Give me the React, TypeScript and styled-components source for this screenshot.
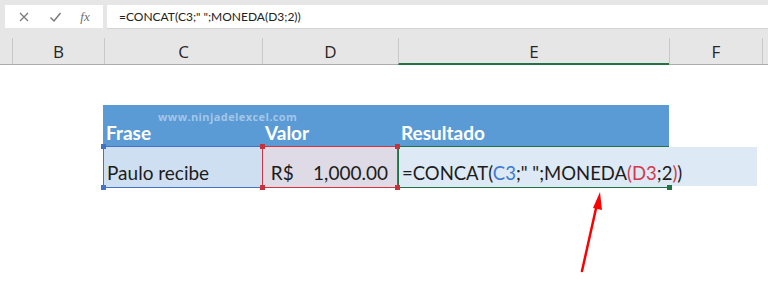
import React from "react";
import styled, { createGlobalStyle } from "styled-components";

const Global = createGlobalStyle`
  html, body { margin: 0; padding: 0; background: #ffffff; }
  body { width: 768px; height: 286px; overflow: hidden; font-family: Lato, "Open Sans", sans-serif; }
`;

const Page = styled.div`
  position: relative;
  width: 768px;
  height: 286px;
  background: #ffffff;
`;

const FormulaBar = styled.div`
  display: flex;
  gap: 4px;
  height: 29px;
  padding: 5px 0 0 5px;
  box-sizing: border-box;
  background: #e6e6e6;
`;

const IconBox = styled.div`
  width: 98px;
  height: 23px;
  background: #ffffff;
  display: flex;
  align-items: center;
  justify-content: space-around;
  padding: 0 4px;
  box-sizing: border-box;
  color: #7a7a7a;
`;

const FxText = styled.span`
  font-family: "Liberation Serif", serif;
  font-style: italic;
  font-size: 13px;
  color: #6e6e6e;
`;

const FormulaInput = styled.div`
  flex: 1;
  height: 23px;
  background: #ffffff;
  border-bottom: 1px solid #d4d4d4;
  display: flex;
  align-items: center;
  padding-left: 12px;
  font-family: Lato, "Open Sans", sans-serif;
  font-size: 12px;
  color: #222222;
  white-space: pre;
`;

const HeaderRow = styled.div`
  display: grid;
  grid-template-columns: 12px 92px 158px 136px 271px 93px 1fr;
  height: 36px;
  background: #e6e6e6;
  border-bottom: 1px solid #ababab;
  box-sizing: border-box;
`;

const ColHead = styled.div<{ $active?: boolean; $sep?: boolean }>`
  display: flex;
  align-items: flex-end;
  justify-content: center;
  margin-top: 9px;
  padding-bottom: 3px;
  border-left: ${(p) => (p.$sep ? "1px solid #c8c8c8" : "none")};
  border-bottom: ${(p) => (p.$active ? "2px solid #217346" : "2px solid transparent")};
  margin-bottom: -1px;
  font-family: "Open Sans", sans-serif;
  font-size: 17px;
  color: #262626;
  line-height: 1;
`;

const Sheet = styled.div`
  padding: 40px 0 0 103px;
`;

const Table = styled.div`
  display: grid;
  grid-template-columns: 159px 136px 271px 88px;
  grid-template-rows: 41px 42px;
  width: max-content;
`;

const HeadCell = styled.div`
  position: relative;
  background: #5b9bd5;
  color: #ffffff;
  font-weight: 700;
  font-size: 19px;
  line-height: 1;
  display: flex;
  align-items: flex-end;
  padding: 0 0 4px 3px;
  box-sizing: border-box;
`;

const Blank = styled.div``;

const DataCell = styled.div<{ $bg: string; $border?: string; $noRight?: boolean }>`
  position: relative;
  background: ${(p) => p.$bg};
  border: ${(p) => (p.$border ? `1px solid ${p.$border}` : "none")};
  border-right: ${(p) => (p.$noRight || !p.$border ? "none" : `1px solid ${p.$border}`)};
  display: flex;
  align-items: flex-end;
  justify-content: space-between;
  padding: 0 9px 3px 3px;
  box-sizing: border-box;
  font-size: 19px;
  color: #1c1c1c;
  white-space: pre;
`;

const FormulaCellText = styled.span`
  font-size: 18.5px;
`;

const Ext = styled.div`
  background: #dde9f5;
  margin: 1px 0 2px;
`;

const Handle = styled.span<{ $c: string; $x: "l" | "r"; $y: "t" | "b" }>`
  position: absolute;
  width: 5px;
  height: 5px;
  background: ${(p) => p.$c};
  ${(p) => (p.$x === "l" ? "left: -3px;" : "right: -3px;")}
  ${(p) => (p.$y === "t" ? "top: -3px;" : "bottom: -3px;")}
  z-index: 2;
`;

const Watermark = styled.span`
  position: absolute;
  left: 55px;
  top: 6px;
  line-height: 1;
  font-family: "Open Sans", sans-serif;
  font-weight: 700;
  font-size: 11px;
  letter-spacing: 0.4px;
  color: rgba(255, 255, 255, 0.45);
  white-space: nowrap;
  z-index: 3;
`;

const Ref = styled.span<{ $c: string }>`
  color: ${(p) => p.$c};
`;

const Arrow = styled.svg`
  position: absolute;
  left: 572px;
  top: 186px;
`;

const BLUE = "#3e7bcf";
const RED = "#d63a4a";

export default function App() {
  return (
    <Page>
      <Global />
      <FormulaBar>
        <IconBox>
          <svg width="12" height="12" viewBox="0 0 12 12">
            <path d="M2 2 L10 10 M10 2 L2 10" stroke="#7a7a7a" strokeWidth="1.3" fill="none" />
          </svg>
          <svg width="13" height="12" viewBox="0 0 13 12">
            <path d="M1.5 6.5 L5 10 L11.5 2" stroke="#7a7a7a" strokeWidth="1.5" fill="none" />
          </svg>
          <FxText>fx</FxText>
        </IconBox>
        <FormulaInput>{'=CONCAT(C3;" ";MONEDA(D3;2))'}</FormulaInput>
      </FormulaBar>
      <HeaderRow>
        <ColHead />
        <ColHead $sep>B</ColHead>
        <ColHead $sep>C</ColHead>
        <ColHead $sep>D</ColHead>
        <ColHead $sep $active>E</ColHead>
        <ColHead $sep>F</ColHead>
        <ColHead $sep />
      </HeaderRow>
      <Sheet>
        <Table>
          <HeadCell>
            Frase
            <Watermark>www.ninjadelexcel.com</Watermark>
          </HeadCell>
          <HeadCell>Valor</HeadCell>
          <HeadCell>Resultado</HeadCell>
          <Blank />
          <DataCell $bg="#cfdff2" $border="#4472c4" $noRight>
            <span>Paulo recibe</span>
            <Handle $c="#4472c4" $x="l" $y="t" />
            <Handle $c="#4472c4" $x="l" $y="b" />
          </DataCell>
          <DataCell $bg="#dedbe6" $border="#d13440">
            <span>{" R$"}</span>
            <span>1,000.00</span>
            <Handle $c="#c8313c" $x="l" $y="t" />
            <Handle $c="#c8313c" $x="l" $y="b" />
            <Handle $c="#c8313c" $x="r" $y="t" />
            <Handle $c="#c8313c" $x="r" $y="b" />
          </DataCell>
          <DataCell $bg="#dde9f5" $border="#217346" $noRight>
            <FormulaCellText>
              =CONCAT(<Ref $c={BLUE}>C3</Ref>;" ";MONEDA<Ref $c={RED}>(D3</Ref>;2<Ref $c={RED}>)</Ref>)
            </FormulaCellText>
            <Handle $c="#217346" $x="r" $y="b" />
          </DataCell>
          <Ext />
        </Table>
      </Sheet>
      <Arrow width="40" height="90" viewBox="0 0 40 90">
        <path d="M10 85 L25 18" stroke="#ff0000" strokeWidth="2.5" strokeLinecap="round" fill="none" />
        <path d="M28 6 L21 22 L30 24 Z" fill="#ff0000" />
      </Arrow>
    </Page>
  );
}
